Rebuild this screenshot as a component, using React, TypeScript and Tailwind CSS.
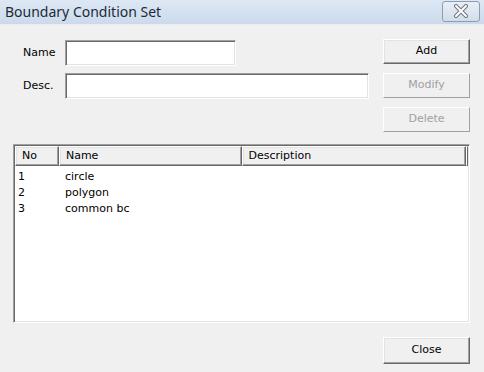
export default function App() {
  const rows = [
    { no: "1", name: "circle", desc: "" },
    { no: "2", name: "polygon", desc: "" },
    { no: "3", name: "common bc", desc: "" },
  ];

  const raised =
    "border border-t-white border-l-white border-b-[#696969] border-r-[#696969] shadow-[inset_-1px_-1px_0_#a0a0a0,inset_1px_1px_0_#e3e3e3]";
  const sunken =
    "border border-t-[#a0a0a0] border-l-[#a0a0a0] border-b-white border-r-white shadow-[inset_1px_1px_0_#696969,inset_-1px_-1px_0_#e3e3e3]";

  return (
    <div className="w-[484px] h-[372px] bg-[#f0f0f0] flex flex-col overflow-hidden font-['DejaVu_Sans',sans-serif] text-[11px] text-black">
      {/* title bar */}
      <div className="h-[25px] flex items-center justify-between bg-gradient-to-b from-[#dde8f4] to-[#cbdaeb] border-b border-[#e6edf5] pl-[5px] pr-[4px]">
        <span className="font-['Noto_Sans',sans-serif] text-[14px] text-[#1e2a38] leading-none">
          Boundary Condition Set
        </span>
        <div className="w-[38px] h-[21px] mb-[2px] rounded-[3px] border border-[#8d9cb1] bg-gradient-to-b from-[#e9eff6] to-[#d2dde9] flex items-center justify-center">
          <svg width="16" height="14" viewBox="0 0 16 14">
            <path d="M3 2 L13 12 M13 2 L3 12" stroke="#6f7783" strokeWidth="4" strokeLinecap="round" />
            <path d="M3 2 L13 12 M13 2 L3 12" stroke="#ffffff" strokeWidth="2" strokeLinecap="round" />
          </svg>
        </div>
      </div>

      {/* body */}
      <div className="flex flex-col pl-[13px] pr-[14px] pt-[14px]">
        <div className="flex justify-between items-start">
          <div className="ml-[10px] mt-[1px] flex flex-col gap-[7px]">
            <div className="flex items-center">
              <label className="w-[42px]">Name</label>
              <input className={`w-[171px] h-[26px] bg-white outline-none ${sunken}`} />
            </div>
            <div className="flex items-center">
              <label className="w-[42px]">Desc.</label>
              <input className={`w-[304px] h-[26px] bg-white outline-none ${sunken}`} />
            </div>
          </div>

          <div className="flex flex-col gap-[9px]">
            <button className={`w-[87px] h-[25px] bg-[#f0f0f0] ${raised}`}>Add</button>
            <button disabled className="w-[87px] h-[25px] bg-[#f0f0f0] text-[#a0a0a0] border border-t-white border-l-white border-b-[#a0a0a0] border-r-[#a0a0a0]">
              Modify
            </button>
            <button disabled className="w-[87px] h-[25px] bg-[#f0f0f0] text-[#a0a0a0] border border-t-white border-l-white border-b-[#a0a0a0] border-r-[#a0a0a0]">
              Delete
            </button>
          </div>
        </div>

        {/* list view */}
        <div className={`mt-[12px] h-[179px] bg-white flex flex-col p-[1px] ${sunken}`}>
          <div className="flex h-[20px] bg-[#f0f0f0]">
            <div className={`w-[44px] pl-[6px] flex items-center ${raised}`}>No</div>
            <div className={`w-[183px] pl-[6px] flex items-center ${raised}`}>Name</div>
            <div className={`w-[225px] pl-[6px] flex items-center ${raised}`}>Description</div>
            <div className={`flex-1 ${raised}`}></div>
          </div>
          <div className="pt-[3px]">
            {rows.map((r) => (
              <div key={r.no} className="flex h-[16px] items-center">
                <div className="w-[44px] pl-[3px]">{r.no}</div>
                <div className="w-[183px] pl-[6px]">{r.name}</div>
                <div className="w-[225px] pl-[6px]">{r.desc}</div>
              </div>
            ))}
          </div>
        </div>

        <div className="flex justify-end mt-[14px]">
          <button className={`w-[87px] h-[27px] bg-[#f0f0f0] ${raised}`}>Close</button>
        </div>
      </div>
    </div>
  );
}
